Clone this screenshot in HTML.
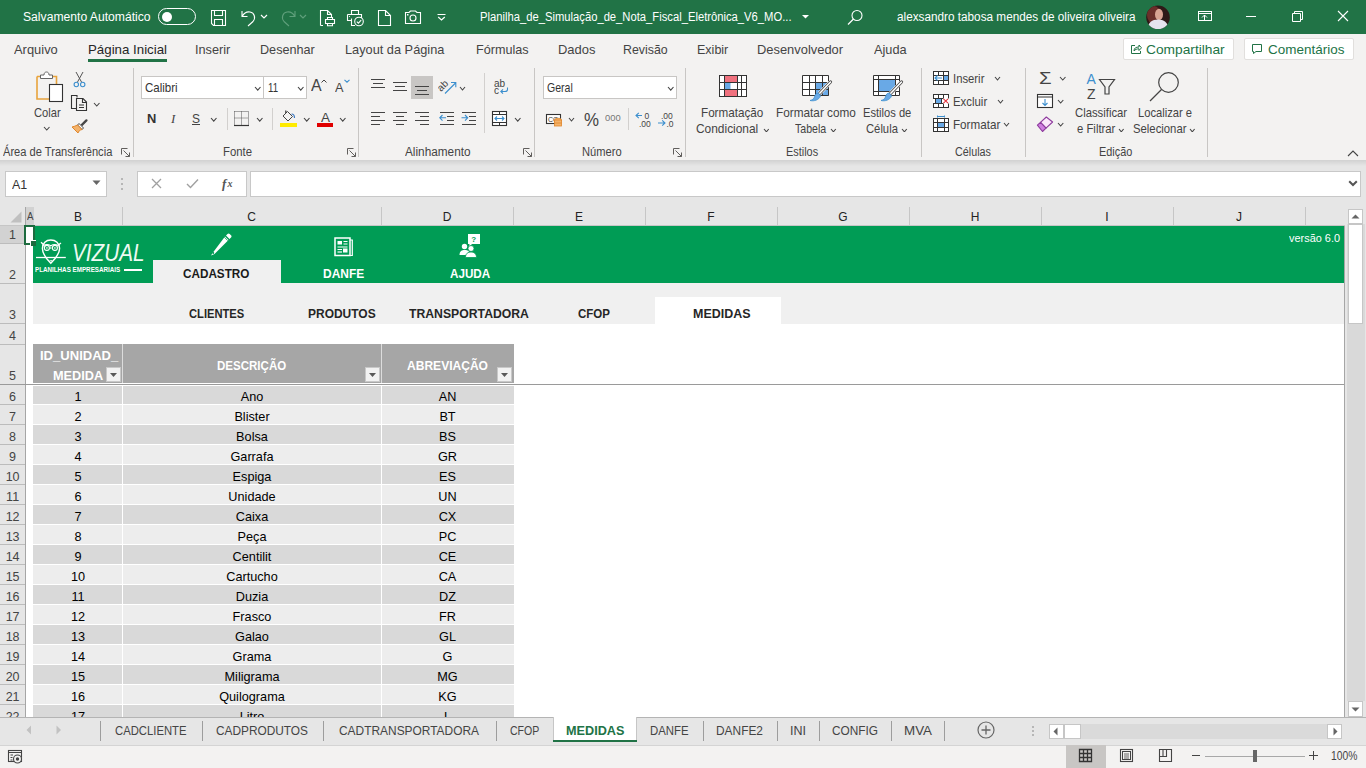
<!DOCTYPE html><html><head><meta charset="utf-8"><style>
html,body{margin:0;padding:0;width:1366px;height:768px;overflow:hidden;background:#fff;}
body{position:relative;font-family:"Liberation Sans",sans-serif;}
body>*{position:absolute;box-sizing:border-box;}
.t{white-space:nowrap;line-height:1;transform-origin:0 0;}
</style></head><body>
<div style="left:0px;top:0px;width:1366px;height:34px;background:#217346;"></div>
<div class="t" style="left:23.00px;top:10.84px;font-size:12px;color:#fff;transform:scaleX(1.0123);">Salvamento Automático</div>
<div style="left:158px;top:8px;width:38px;height:17px;background:transparent;border:1.2px solid #fff;border-radius:9px;"></div>
<div style="left:161.5px;top:11.5px;width:10px;height:10px;background:#fff;border-radius:50%;"></div>
<svg style="left:210px;top:9px;" width="18" height="18" viewBox="0 0 18 18"><path d="M1.5 1.5 H15.5 V16.5 H3.5 L1.5 14.5 Z M4.5 1.5 V6.5 H12.5 V1.5 M4.5 16.5 V10.5 H12.5 V16.5" fill="none" stroke="#fff" stroke-width="1.1"/></svg>
<svg style="left:240px;top:9px;" width="18" height="18" viewBox="0 0 18 18"><path d="M2 2 V7.5 H7.5 M2.3 7.2 C4 4.2 7 2.5 10 3 C14.5 3.8 16 9 13 12.5 L8 17" fill="none" stroke="#fff" stroke-width="1.1"/></svg>
<svg style="left:260px;top:14px;" width="8" height="5" viewBox="0 0 8 5"><path d="M1 1 L4.0 4 L7 1" fill="none" stroke="#fff" stroke-width="1.2"/></svg>
<svg style="left:279px;top:9px;" width="18" height="18" viewBox="0 0 18 18"><path d="M16 2 V7.5 H10.5 M15.7 7.2 C14 4.2 11 2.5 8 3 C3.5 3.8 2 9 5 12.5 L10 17" fill="none" stroke="#5f9f7b" stroke-width="1.1"/></svg>
<svg style="left:299px;top:14px;" width="8" height="5" viewBox="0 0 8 5"><path d="M1 1 L4.0 4 L7 1" fill="none" stroke="#5f9f7b" stroke-width="1.2"/></svg>
<svg style="left:319px;top:10px;" width="17" height="17" viewBox="0 0 17 17"><path d="M1.5 15.5 V0.5 H8.5 L12.5 4.5 V7 M8.5 0.5 V4.5 H12.5 M1.5 15.5 H4" fill="none" stroke="#fff" stroke-width="1.1"/><path d="M6.5 9.5 H15.5 V13.5 H6.5 Z M8.5 9.5 V7.5 H13.5 V9.5 M8.5 13.5 V15.8 H13.5 V13.5" fill="none" stroke="#fff" stroke-width="1.1"/></svg>
<svg style="left:346px;top:9px;" width="19" height="19" viewBox="0 0 19 19"><path d="M5.5 5.5 V1.5 H12.5 V5.5 M1.5 5.5 H15.5 V9 M1.5 5.5 V11.5 H5.5 M5.5 9.5 V16.5 H9" fill="none" stroke="#fff" stroke-width="1.1"/><circle cx="3.5" cy="7.5" r="0.6" fill="#fff"/><circle cx="13" cy="12.5" r="4.3" fill="#217346" stroke="#fff" stroke-width="1.1"/><path d="M10.8 12.6 L12.4 14.2 L15.2 11.2" fill="none" stroke="#fff" stroke-width="1.1"/></svg>
<svg style="left:377px;top:10px;" width="15" height="17" viewBox="0 0 15 17"><path d="M1.5 0.5 H8.5 L13.5 5.5 V15.5 H1.5 Z M8.5 0.5 V5.5 H13.5" fill="none" stroke="#fff" stroke-width="1.1"/></svg>
<svg style="left:404px;top:10px;" width="18" height="15" viewBox="0 0 18 15"><path d="M1.5 2.5 H5 L6.5 1 H11.5 L13 2.5 H16.5 V13.5 H1.5 Z" fill="none" stroke="#fff" stroke-width="1.1"/><circle cx="9" cy="8" r="3" fill="none" stroke="#fff" stroke-width="1.1"/><rect x="3" y="4" width="1.5" height="1.5" fill="#fff"/></svg>
<svg style="left:437px;top:12px;" width="9" height="9" viewBox="0 0 9 9"><path d="M0.5 2.5 H8.5" stroke="#fff" stroke-width="1"/><path d="M1.2 5 L4.5 8 L7.8 5" fill="none" stroke="#fff" stroke-width="1.2"/></svg>
<div class="t" style="left:480.40px;top:10.84px;font-size:12px;color:#fff;transform:scaleX(0.9359);">Planilha_de_Simulação_de_Nota_Fiscal_Eletrônica_V6_MO...</div>
<svg style="left:801px;top:14px;" width="9" height="6" viewBox="0 0 9 6"><path d="M1 1 L4.5 4.5 L8 1 Z" fill="#fff"/></svg>
<svg style="left:847px;top:9px;" width="17" height="17" viewBox="0 0 17 17"><circle cx="10" cy="6.5" r="5" fill="none" stroke="#fff" stroke-width="1.1"/><path d="M6.5 10 L1 15.5" stroke="#fff" stroke-width="1.2"/></svg>
<div class="t" style="left:897.00px;top:10.84px;font-size:12px;color:#fff;transform:scaleX(0.9797);">alexsandro tabosa mendes de oliveira oliveira</div>
<svg style="left:1146px;top:5px;" width="24" height="25" viewBox="0 0 24 25"><defs><clipPath id="av"><circle cx="12" cy="12.3" r="11.8"/></clipPath></defs><g clip-path="url(#av)"><rect width="24" height="25" fill="#2e1a18"/><ellipse cx="8" cy="10" rx="7" ry="9" fill="#6b2f2a"/><ellipse cx="13" cy="9.5" rx="4" ry="5.8" fill="#d9a493"/><path d="M1 25 C1.5 18 6 14.5 12 14.5 C18 14.5 22.5 18 23 25 Z" fill="#e6e4ee"/></g></svg>
<svg style="left:1197px;top:10px;" width="16" height="12" viewBox="0 0 16 12"><rect x="1.5" y="1.5" width="13" height="9" fill="none" stroke="#fff" stroke-width="1"/><path d="M1.5 3.5 H14.5" stroke="#fff" stroke-width="1"/><path d="M7.5 10.5 V5 M5 7.5 L7.5 5 L10 7.5" fill="none" stroke="#fff" stroke-width="1"/></svg>
<div style="left:1246px;top:16px;width:10px;height:1.2px;background:#fff;"></div>
<svg style="left:1290px;top:9px;" width="14" height="14" viewBox="0 0 14 14"><path d="M2.5 4.5 H10.5 V12.5 H2.5 Z M4.5 4.5 V2.5 H12.5 V10.5 H10.5" fill="none" stroke="#fff" stroke-width="1"/></svg>
<svg style="left:1336px;top:9px;" width="14" height="14" viewBox="0 0 14 14"><path d="M2 2 L12 12 M12 2 L2 12" stroke="#fff" stroke-width="1.1"/></svg>
<div style="left:0px;top:34px;width:1366px;height:126px;background:#f3f2f1;"></div>
<div class="t" style="left:14.10px;top:43.00px;font-size:13px;color:#444;transform:scaleX(0.9933);">Arquivo</div>
<div class="t" style="left:88.20px;top:43.00px;font-size:13px;color:#262626;transform:scaleX(1.0225);">Página Inicial</div>
<div class="t" style="left:195.30px;top:43.00px;font-size:13px;color:#444;transform:scaleX(0.9772);">Inserir</div>
<div class="t" style="left:260.00px;top:43.00px;font-size:13px;color:#444;transform:scaleX(0.9718);">Desenhar</div>
<div class="t" style="left:345.00px;top:43.00px;font-size:13px;color:#444;transform:scaleX(0.9819);">Layout da Página</div>
<div class="t" style="left:476.00px;top:43.00px;font-size:13px;color:#444;transform:scaleX(0.9707);">Fórmulas</div>
<div class="t" style="left:558.00px;top:43.00px;font-size:13px;color:#444;transform:scaleX(0.9975);">Dados</div>
<div class="t" style="left:623.00px;top:43.00px;font-size:13px;color:#444;transform:scaleX(0.9514);">Revisão</div>
<div class="t" style="left:696.70px;top:43.00px;font-size:13px;color:#444;transform:scaleX(0.9626);">Exibir</div>
<div class="t" style="left:757.40px;top:43.00px;font-size:13px;color:#444;transform:scaleX(0.9925);">Desenvolvedor</div>
<div class="t" style="left:874.20px;top:43.00px;font-size:13px;color:#444;transform:scaleX(0.9800);">Ajuda</div>
<div style="left:88px;top:59px;width:79px;height:3px;background:#217346;"></div>
<div style="left:1123px;top:38px;width:111px;height:22px;background:#fff;border:1px solid #e1dfdd;border-radius:2px;"></div>
<div style="left:1243.5px;top:38px;width:110px;height:22px;background:#fff;border:1px solid #e1dfdd;border-radius:2px;"></div>
<svg style="left:1130px;top:43px;" width="12" height="12" viewBox="0 0 12 12"><path d="M5 2.5 H1.5 V10.5 H10.5 V8" fill="none" stroke="#217346" stroke-width="1"/><path d="M4 8 C4 5 6 4 9 4 V2 L11.5 4.8 L9 7.5 V5.8 C7 5.8 5 6.5 4 8 Z" fill="none" stroke="#217346" stroke-width="1"/></svg>
<div class="t" style="left:1146.20px;top:43.00px;font-size:13px;color:#217346;transform:scaleX(1.0573);">Compartilhar</div>
<svg style="left:1251px;top:43px;" width="12" height="12" viewBox="0 0 12 12"><path d="M1.5 1.5 H10.5 V8.5 H5 L2.5 10.5 V8.5 H1.5 Z" fill="none" stroke="#217346" stroke-width="1"/></svg>
<div class="t" style="left:1267.50px;top:43.00px;font-size:13px;color:#217346;transform:scaleX(1.0364);">Comentários</div>
<div class="t" style="left:3.20px;top:145.84px;font-size:12px;color:#444;transform:scaleX(0.9259);">Área de Transferência</div>
<div class="t" style="left:222.70px;top:145.84px;font-size:12px;color:#444;transform:scaleX(0.9455);">Fonte</div>
<div class="t" style="left:405.00px;top:145.84px;font-size:12px;color:#444;transform:scaleX(0.9820);">Alinhamento</div>
<div class="t" style="left:581.60px;top:145.84px;font-size:12px;color:#444;transform:scaleX(0.9277);">Número</div>
<div class="t" style="left:786.30px;top:145.84px;font-size:12px;color:#444;transform:scaleX(0.9082);">Estilos</div>
<div class="t" style="left:955.40px;top:145.84px;font-size:12px;color:#444;transform:scaleX(0.8968);">Células</div>
<div class="t" style="left:1099.30px;top:145.84px;font-size:12px;color:#444;transform:scaleX(0.9077);">Edição</div>
<svg style="left:121px;top:148px;" width="10" height="10" viewBox="0 0 10 10"><path d="M0.5 6.5 V0.5 H6.5" fill="none" stroke="#605e5c" stroke-width="1"/><path d="M2.5 2.5 L8.5 8.5 M8.5 4.5 V8.5 H4.5" fill="none" stroke="#605e5c" stroke-width="1"/></svg>
<svg style="left:347px;top:148px;" width="10" height="10" viewBox="0 0 10 10"><path d="M0.5 6.5 V0.5 H6.5" fill="none" stroke="#605e5c" stroke-width="1"/><path d="M2.5 2.5 L8.5 8.5 M8.5 4.5 V8.5 H4.5" fill="none" stroke="#605e5c" stroke-width="1"/></svg>
<svg style="left:523px;top:148px;" width="10" height="10" viewBox="0 0 10 10"><path d="M0.5 6.5 V0.5 H6.5" fill="none" stroke="#605e5c" stroke-width="1"/><path d="M2.5 2.5 L8.5 8.5 M8.5 4.5 V8.5 H4.5" fill="none" stroke="#605e5c" stroke-width="1"/></svg>
<svg style="left:673px;top:148px;" width="10" height="10" viewBox="0 0 10 10"><path d="M0.5 6.5 V0.5 H6.5" fill="none" stroke="#605e5c" stroke-width="1"/><path d="M2.5 2.5 L8.5 8.5 M8.5 4.5 V8.5 H4.5" fill="none" stroke="#605e5c" stroke-width="1"/></svg>
<div style="left:133px;top:68px;width:1px;height:89px;background:#c8c6c4;"></div>
<div style="left:358px;top:68px;width:1px;height:89px;background:#c8c6c4;"></div>
<div style="left:534px;top:68px;width:1px;height:89px;background:#c8c6c4;"></div>
<div style="left:685px;top:68px;width:1px;height:89px;background:#c8c6c4;"></div>
<div style="left:921px;top:68px;width:1px;height:89px;background:#c8c6c4;"></div>
<div style="left:1025px;top:68px;width:1px;height:89px;background:#c8c6c4;"></div>
<div style="left:1207px;top:68px;width:1px;height:89px;background:#c8c6c4;"></div>
<div style="left:227px;top:108px;width:1px;height:22px;background:#d2d0ce;"></div>
<div style="left:272px;top:108px;width:1px;height:22px;background:#d2d0ce;"></div>
<div style="left:484px;top:73px;width:1px;height:60px;background:#d2d0ce;"></div>
<div style="left:628px;top:108px;width:1px;height:22px;background:#d2d0ce;"></div>
<svg style="left:1347px;top:150px;" width="12" height="7" viewBox="0 0 12 7"><path d="M1 6 L6 1 L11 6" fill="none" stroke="#444" stroke-width="1.1"/></svg>
<svg style="left:35px;top:71px;" width="29" height="32" viewBox="0 0 29 32"><path d="M2 5.5 H6 M14 5.5 H21.5 V13" fill="none" stroke="#e8a33c" stroke-width="1.6"/><path d="M2 5.5 V28 H14" fill="none" stroke="#e8a33c" stroke-width="1.6"/><path d="M5.5 7.5 V4 H9 C9 2 10 1 11.5 1 C13 1 14 2 14 4 H17.5 V7.5 Z" fill="#fff" stroke="#666" stroke-width="1"/><rect x="14.5" y="13.5" width="13" height="17" fill="#fff" stroke="#333" stroke-width="1.1"/></svg>
<div class="t" style="left:34.10px;top:105.70px;font-size:13px;color:#444;transform:scaleX(0.8591);">Colar</div>
<svg style="left:43px;top:126px;" width="7.5" height="5" viewBox="0 0 7.5 5"><path d="M1 1 L3.75 4 L6.5 1" fill="none" stroke="#444" stroke-width="1.1"/></svg>
<svg style="left:73px;top:71px;" width="13" height="17" viewBox="0 0 13 17"><path d="M3 1 L8.5 11 M10 1 L4.5 11" stroke="#555" stroke-width="1"/><circle cx="3.3" cy="13.5" r="2.2" fill="none" stroke="#3c8fce" stroke-width="1.1"/><circle cx="9.7" cy="13.5" r="2.2" fill="none" stroke="#3c8fce" stroke-width="1.1"/></svg>
<svg style="left:70px;top:94px;" width="19" height="18" viewBox="0 0 19 18"><path d="M7 3.5 V1.5 H1.5 V14.5 H6" fill="none" stroke="#333" stroke-width="1.1"/><path d="M6.5 4.5 H13 L16.5 8 V16.5 H6.5 Z M12.5 4.5 V8.5 H16.5 M9 11 H14 M9 13.5 H14" fill="none" stroke="#333" stroke-width="1.1"/></svg>
<svg style="left:93px;top:101.5px;" width="7.5" height="5" viewBox="0 0 7.5 5"><path d="M1 1 L3.75 4 L6.5 1" fill="none" stroke="#444" stroke-width="1.1"/></svg>
<svg style="left:71px;top:118px;" width="17" height="16" viewBox="0 0 17 16"><path d="M10 7 L15 2 C15.6 1.4 16.4 2.2 15.8 2.8 L10.8 7.8" fill="none" stroke="#444" stroke-width="1.1"/><path d="M8 5.5 L12.5 10 L11 11.5 L6.5 7 Z" fill="#fff" stroke="#444" stroke-width="1"/><path d="M6.5 7 C5 8 2.5 8.5 1 9 L7 15 C7.5 13.5 8.5 12 11 11.5 Z" fill="#f3b26a" stroke="#e0862a" stroke-width="1"/></svg>
<div style="left:141px;top:76px;width:123px;height:23px;background:#fff;border:1px solid #c8c6c4;"></div>
<div style="left:263px;top:76px;width:44px;height:23px;background:#fff;border:1px solid #c8c6c4;"></div>
<div class="t" style="left:144.80px;top:81.00px;font-size:13px;color:#333;transform:scaleX(0.8872);">Calibri</div>
<svg style="left:254px;top:85.5px;" width="7.5" height="5.2" viewBox="0 0 7.5 5.2"><path d="M1 1 L3.75 4.2 L6.5 1" fill="none" stroke="#444" stroke-width="1.1"/></svg>
<div class="t" style="left:268.00px;top:81.00px;font-size:13px;color:#333;transform:scaleX(0.7407);">11</div>
<svg style="left:297px;top:85.5px;" width="7.5" height="5.2" viewBox="0 0 7.5 5.2"><path d="M1 1 L3.75 4.2 L6.5 1" fill="none" stroke="#444" stroke-width="1.1"/></svg>
<div class="t" style="left:311.00px;top:78.46px;font-size:16px;color:#444;transform:scaleX(0.9933);">A</div>
<svg style="left:321px;top:79px;" width="6" height="4" viewBox="0 0 6 4"><path d="M0.5 3.5 L3 1 L5.5 3.5" fill="none" stroke="#444" stroke-width="1"/></svg>
<div class="t" style="left:334.80px;top:81.00px;font-size:13px;color:#444;transform:scaleX(0.9802);">A</div>
<svg style="left:344px;top:79px;" width="6" height="4" viewBox="0 0 6 4"><path d="M0.5 0.8 L3 3.2 L5.5 0.8" fill="none" stroke="#3c8fce" stroke-width="1.1"/></svg>
<div class="t" style="left:146.90px;top:111.77px;font-size:13.5px;color:#333;font-weight:bold;transform:scaleX(0.9538);">N</div>
<div class="t" style="left:171.00px;top:112.20px;font-size:13px;color:#444;font-family:'Liberation Serif';font-style:italic;">I</div>
<div class="t" style="left:192.00px;top:112.20px;font-size:13px;color:#444;transform:scaleX(0.9225);">S</div>
<div style="left:192px;top:124.2px;width:8px;height:1px;background:#444;"></div>
<svg style="left:209.5px;top:116.5px;" width="7.5" height="5.2" viewBox="0 0 7.5 5.2"><path d="M1 1 L3.75 4.2 L6.5 1" fill="none" stroke="#444" stroke-width="1.1"/></svg>
<svg style="left:233px;top:110px;" width="17" height="17" viewBox="0 0 17 17"><path d="M1.5 1.5 H15.5 V14.5 M1.5 1.5 V14.5 M8.5 1.5 V14.5 M1.5 8 H15.5" fill="none" stroke="#555" stroke-width="1" stroke-dasharray="1 1"/><path d="M1 15.5 H16" stroke="#333" stroke-width="1.2"/></svg>
<svg style="left:256px;top:116.5px;" width="7.5" height="5.2" viewBox="0 0 7.5 5.2"><path d="M1 1 L3.75 4.2 L6.5 1" fill="none" stroke="#444" stroke-width="1.1"/></svg>
<svg style="left:280px;top:110px;" width="17" height="18" viewBox="0 0 17 18"><path d="M3 6 L7.5 1.5 L12.5 6.5 L8 11 Z" fill="none" stroke="#444" stroke-width="1"/><path d="M5.5 3 V1 C5.5 0.5 6.2 0.5 6.2 1 V3" fill="none" stroke="#444" stroke-width="0.8"/><path d="M11.5 4 C13.5 4 14.5 5.5 14.5 8" fill="none" stroke="#3c79c4" stroke-width="1.2"/></svg>
<div style="left:280px;top:123px;width:16.5px;height:4px;background:#ffeb00;"></div>
<svg style="left:302.9px;top:116.5px;" width="7.5" height="5.2" viewBox="0 0 7.5 5.2"><path d="M1 1 L3.75 4.2 L6.5 1" fill="none" stroke="#444" stroke-width="1.1"/></svg>
<div class="t" style="left:320.50px;top:111.00px;font-size:13px;color:#444;transform:scaleX(1.0378);">A</div>
<div style="left:316.8px;top:123px;width:16.4px;height:4px;background:#e00000;"></div>
<svg style="left:339px;top:116.5px;" width="7.5" height="5.2" viewBox="0 0 7.5 5.2"><path d="M1 1 L3.75 4.2 L6.5 1" fill="none" stroke="#444" stroke-width="1.1"/></svg>
<div style="left:371px;top:79px;width:14px;height:1.2px;background:#444;"></div>
<div style="left:373px;top:83px;width:10px;height:1.2px;background:#444;"></div>
<div style="left:371px;top:87px;width:14px;height:1.2px;background:#444;"></div>
<div style="left:393px;top:82px;width:14px;height:1.2px;background:#444;"></div>
<div style="left:395px;top:86px;width:10px;height:1.2px;background:#444;"></div>
<div style="left:393px;top:90px;width:14px;height:1.2px;background:#444;"></div>
<div style="left:411px;top:76px;width:22px;height:23px;background:#c8c6c4;"></div>
<div style="left:415px;top:86px;width:14px;height:1.2px;background:#444;"></div>
<div style="left:417px;top:90px;width:10px;height:1.2px;background:#444;"></div>
<div style="left:415px;top:94px;width:14px;height:1.2px;background:#444;"></div>
<svg style="left:438px;top:78px;" width="20" height="17" viewBox="0 0 20 17"><text x="0" y="0" transform="translate(3,14) rotate(-45)" font-family="Liberation Sans" font-size="10" fill="#444">ab</text><path d="M7 15.5 L17.5 5 M13 4.5 H17.8 V9.3" fill="none" stroke="#3c8fce" stroke-width="1.1"/></svg>
<svg style="left:459px;top:85.5px;" width="7" height="5" viewBox="0 0 7 5"><path d="M1 1 L3.5 4 L6 1" fill="none" stroke="#444" stroke-width="1.1"/></svg>
<svg style="left:493px;top:78px;" width="17" height="18" viewBox="0 0 17 18"><text x="1" y="8.5" font-family="Liberation Sans" font-size="10" fill="#444">ab</text><text x="1" y="16" font-family="Liberation Sans" font-size="10" fill="#444">c</text><path d="M14.5 9.5 V11.5 C14.5 13 13.5 13.5 12 13.5 H8 M10 11.3 L7.8 13.5 L10 15.7" fill="none" stroke="#3c8fce" stroke-width="1.1"/></svg>
<div style="left:371px;top:112px;width:14px;height:1.2px;background:#444;"></div>
<div style="left:371px;top:116px;width:9px;height:1.2px;background:#444;"></div>
<div style="left:371px;top:120px;width:14px;height:1.2px;background:#444;"></div>
<div style="left:371px;top:124px;width:9px;height:1.2px;background:#444;"></div>
<div style="left:393px;top:112px;width:14px;height:1.2px;background:#444;"></div>
<div style="left:396px;top:116px;width:8px;height:1.2px;background:#444;"></div>
<div style="left:393px;top:120px;width:14px;height:1.2px;background:#444;"></div>
<div style="left:396px;top:124px;width:8px;height:1.2px;background:#444;"></div>
<div style="left:415px;top:112px;width:14px;height:1.2px;background:#444;"></div>
<div style="left:420px;top:116px;width:9px;height:1.2px;background:#444;"></div>
<div style="left:415px;top:120px;width:14px;height:1.2px;background:#444;"></div>
<div style="left:420px;top:124px;width:9px;height:1.2px;background:#444;"></div>
<div style="left:440px;top:112px;width:14px;height:1.2px;background:#444;"></div>
<div style="left:440px;top:124px;width:14px;height:1.2px;background:#444;"></div>
<div style="left:447px;top:116px;width:7px;height:1.2px;background:#444;"></div>
<div style="left:447px;top:120px;width:7px;height:1.2px;background:#444;"></div>
<svg style="left:439px;top:114px;" width="8" height="8" viewBox="0 0 8 8"><path d="M7 3.8 H1 M3.5 1 L0.8 3.8 L3.5 6.6" fill="none" stroke="#3c8fce" stroke-width="1.1"/></svg>
<div style="left:462px;top:112px;width:14px;height:1.2px;background:#444;"></div>
<div style="left:462px;top:124px;width:14px;height:1.2px;background:#444;"></div>
<div style="left:469px;top:116px;width:7px;height:1.2px;background:#444;"></div>
<div style="left:469px;top:120px;width:7px;height:1.2px;background:#444;"></div>
<svg style="left:461px;top:114px;" width="8" height="8" viewBox="0 0 8 8"><path d="M0.5 3.8 H6.5 M4 1 L6.7 3.8 L4 6.6" fill="none" stroke="#3c8fce" stroke-width="1.1"/></svg>
<svg style="left:491px;top:110px;" width="17" height="17" viewBox="0 0 17 17"><rect x="1.5" y="1.5" width="14" height="14" fill="#fff" stroke="#333" stroke-width="1.1"/><path d="M1.5 4.5 H15.5 M1.5 12.5 H15.5 M8.5 1.5 V4.5 M8.5 12.5 V15.5" stroke="#333" stroke-width="1"/><path d="M4 8.5 H13 M6 6.5 L4 8.5 L6 10.5 M11 6.5 L13 8.5 L11 10.5" fill="none" stroke="#3c8fce" stroke-width="1.1"/></svg>
<svg style="left:513.5px;top:116.5px;" width="7.5" height="5.2" viewBox="0 0 7.5 5.2"><path d="M1 1 L3.75 4.2 L6.5 1" fill="none" stroke="#444" stroke-width="1.1"/></svg>
<div style="left:543px;top:76px;width:134px;height:23px;background:#fff;border:1px solid #c8c6c4;"></div>
<div class="t" style="left:546.80px;top:81.00px;font-size:13px;color:#333;transform:scaleX(0.8114);">Geral</div>
<svg style="left:666.5px;top:85.5px;" width="7.5" height="5.2" viewBox="0 0 7.5 5.2"><path d="M1 1 L3.75 4.2 L6.5 1" fill="none" stroke="#444" stroke-width="1.1"/></svg>
<svg style="left:545px;top:113px;" width="19" height="15" viewBox="0 0 19 15"><rect x="1.5" y="1.5" width="14" height="9" fill="#fff" stroke="#333" stroke-width="1.1"/><text x="3" y="9" font-family="Liberation Sans" font-size="7" fill="#333">CC</text><ellipse cx="13" cy="7" rx="3.5" ry="1.8" fill="#f3b26a" stroke="#e0862a" stroke-width="0.8"/><rect x="9.5" y="7" width="7" height="6" fill="#f3b26a" stroke="#e0862a" stroke-width="0.8"/><path d="M9.5 10 H16.5" stroke="#e0862a" stroke-width="0.8"/></svg>
<svg style="left:568px;top:116.5px;" width="7" height="5" viewBox="0 0 7 5"><path d="M1 1 L3.5 4 L6 1" fill="none" stroke="#444" stroke-width="1.1"/></svg>
<div class="t" style="left:583.50px;top:109.62px;font-size:19px;color:#444;transform:scaleX(0.8881);">%</div>
<div class="t" style="left:605.00px;top:114.38px;font-size:9px;color:#777;transform:scaleX(1.0400);">000</div>
<svg style="left:635px;top:111px;" width="18" height="16" viewBox="0 0 18 16"><path d="M7 4.5 H1 M3.8 1.8 L1 4.5 L3.8 7.2" fill="none" stroke="#3c8fce" stroke-width="1.1"/><text x="9.5" y="8" font-family="Liberation Sans" font-size="8.5" fill="#444">0</text><text x="4" y="15.5" font-family="Liberation Sans" font-size="8.5" fill="#444">.00</text></svg>
<svg style="left:657px;top:111px;" width="18" height="16" viewBox="0 0 18 16"><text x="4" y="8" font-family="Liberation Sans" font-size="8.5" fill="#444">.00</text><path d="M1 12 H8 M5.2 9.3 L8 12 L5.2 14.7" fill="none" stroke="#3c8fce" stroke-width="1.1"/><text x="9.5" y="15.5" font-family="Liberation Sans" font-size="8.5" fill="#444">.0</text></svg>
<svg style="left:719px;top:75px;" width="28" height="22" viewBox="0 0 28 22"><rect width="28" height="22" fill="#fff"/><rect x="5.5" y="0.5" width="13" height="7" fill="#f0727f"/><rect x="5.5" y="14.5" width="13" height="7" fill="#f0727f"/><rect x="5.5" y="7.5" width="6" height="7" fill="#69a9e6"/><path d="M5.5 0.5 V21.5" stroke="#333" stroke-width="1"/><path d="M18.5 0.5 V21.5" stroke="#333" stroke-width="1"/><path d="M22.5 0.5 V21.5" stroke="#333" stroke-width="1"/><path d="M0.5 7.5 H27.5" stroke="#333" stroke-width="1"/><path d="M0.5 14.5 H27.5" stroke="#333" stroke-width="1"/><rect x="0.5" y="0.5" width="27" height="21" fill="none" stroke="#333" stroke-width="1"/></svg>
<svg style="left:701.4px;top:100px;" width="0" height="0" viewBox="0 0 0 0"></svg>
<div class="t" style="left:701.40px;top:105.80px;font-size:13px;color:#444;transform:scaleX(0.8980);">Formatação</div>
<div class="t" style="left:695.90px;top:121.80px;font-size:13px;color:#444;transform:scaleX(0.9166);">Condicional</div>
<svg style="left:762.5px;top:127.5px;" width="6.8" height="4.8" viewBox="0 0 6.8 4.8"><path d="M1 1 L3.4 3.8 L5.8 1" fill="none" stroke="#444" stroke-width="1.1"/></svg>
<svg style="left:802px;top:74px;" width="31" height="28" viewBox="0 0 31 28"><rect x="0.5" y="1" width="26" height="21" fill="#fff"/><rect x="13" y="8" width="14" height="14" fill="#69a9e6"/><path d="M0.5 1.5 H26.5 V21.5 H0.5 Z M7.5 1 V22 M13.5 1 V22 M20.5 1 V22 M0.5 8.5 H26.5 M0.5 15.5 H26.5" fill="none" stroke="#333" stroke-width="1"/><path d="M28 8.5 L17 20" stroke="#fff" stroke-width="4"/><path d="M28.5 8 L17.5 19.5" stroke="#444" stroke-width="3.2" stroke-linecap="round"/><path d="M28.5 8 L17.5 19.5" stroke="#fff" stroke-width="1.6" stroke-linecap="round"/><path d="M16.5 19 C14 19 13 20.5 12.5 23 C12 25 10 26 8 26.5 C12 27.5 17 26 18.5 22 Z" fill="#69a9e6" stroke="#3c8fce" stroke-width="0.8"/></svg>
<div class="t" style="left:775.90px;top:105.80px;font-size:13px;color:#444;transform:scaleX(0.9065);">Formatar como</div>
<div class="t" style="left:795.20px;top:121.80px;font-size:13px;color:#444;transform:scaleX(0.8140);">Tabela</div>
<svg style="left:830.4px;top:127.5px;" width="6.8" height="4.8" viewBox="0 0 6.8 4.8"><path d="M1 1 L3.4 3.8 L5.8 1" fill="none" stroke="#444" stroke-width="1.1"/></svg>
<svg style="left:873px;top:74px;" width="31" height="28" viewBox="0 0 31 28"><rect x="0.5" y="1" width="26" height="21" fill="#fff"/><rect x="5" y="5" width="17" height="12" fill="#69a9e6"/><path d="M0.5 1.5 H26.5 V21.5 H0.5 Z M5.5 1 V22 M22.5 1 V22 M0.5 5.5 H26.5 M0.5 17.5 H26.5" fill="none" stroke="#333" stroke-width="1"/><path d="M28 8.5 L17 20" stroke="#f3f2f1" stroke-width="4"/><path d="M28.5 8 L17.5 19.5" stroke="#444" stroke-width="3.2" stroke-linecap="round"/><path d="M28.5 8 L17.5 19.5" stroke="#fff" stroke-width="1.6" stroke-linecap="round"/><path d="M16.5 19 C14 19 13 20.5 12.5 23 C12 25 10 26 8 26.5 C12 27.5 17 26 18.5 22 Z" fill="#69a9e6" stroke="#3c8fce" stroke-width="0.8"/></svg>
<div class="t" style="left:862.60px;top:105.80px;font-size:13px;color:#444;transform:scaleX(0.8568);">Estilos de</div>
<div class="t" style="left:866.00px;top:121.80px;font-size:13px;color:#444;transform:scaleX(0.8651);">Célula</div>
<svg style="left:901.1px;top:127.5px;" width="6.8" height="4.8" viewBox="0 0 6.8 4.8"><path d="M1 1 L3.4 3.8 L5.8 1" fill="none" stroke="#444" stroke-width="1.1"/></svg>
<svg style="left:932px;top:70px;" width="18" height="16" viewBox="0 0 18 16"><rect x="1.5" y="1.5" width="15" height="13" fill="#fff" stroke="#333" stroke-width="1"/><rect x="12" y="6" width="4" height="4" fill="#69a9e6"/><path d="M1.5 5.5 H16.5 M1.5 10.5 H16.5 M6.5 1.5 V5.5 M6.5 10.5 V14.5 M11.5 1.5 V14.5" fill="none" stroke="#333" stroke-width="1"/><path d="M10 8 H3 M5.5 5.5 L3 8 L5.5 10.5" fill="none" stroke="#3c8fce" stroke-width="1.1"/></svg>
<div class="t" style="left:952.70px;top:72.00px;font-size:13px;color:#444;transform:scaleX(0.8692);">Inserir</div>
<svg style="left:994px;top:76px;" width="7" height="5" viewBox="0 0 7 5"><path d="M1 1 L3.5 4 L6 1" fill="none" stroke="#444" stroke-width="1.1"/></svg>
<svg style="left:932px;top:93px;" width="18" height="16" viewBox="0 0 18 16"><rect x="1" y="1" width="16" height="14" fill="#fff"/><rect x="4" y="6" width="5" height="4" fill="#69a9e6"/><path d="M1 1.5 H17 M1 14.5 H17 M1.5 1.5 V5.5 M1.5 10.5 V14.5 M16.5 1.5 V5.5 M16.5 10.5 V14.5 M1 5.5 H11 M1 10.5 H11 M6.5 1.5 V5.5 M6.5 10.5 V14.5 M11.5 1.5 V5.5 M11.5 10.5 V14.5 M3.5 5.5 V10.5 M9.5 5.5 V10.5" fill="none" stroke="#333" stroke-width="1"/><path d="M11.5 5.8 L16 10.2 M16 5.8 L11.5 10.2" stroke="#e3323c" stroke-width="1.1"/></svg>
<div class="t" style="left:952.70px;top:95.00px;font-size:13px;color:#444;transform:scaleX(0.8766);">Excluir</div>
<svg style="left:996.7px;top:99px;" width="7" height="5" viewBox="0 0 7 5"><path d="M1 1 L3.5 4 L6 1" fill="none" stroke="#444" stroke-width="1.1"/></svg>
<svg style="left:932px;top:115px;" width="18" height="18" viewBox="0 0 18 18"><rect x="1.5" y="3.5" width="15" height="13" fill="#fff" stroke="#333" stroke-width="1"/><rect x="6" y="8" width="6" height="4" fill="#69a9e6"/><path d="M1.5 7.5 H16.5 M1.5 12.5 H16.5 M5.5 3.5 V16.5 M12.5 3.5 V16.5" fill="none" stroke="#333" stroke-width="1"/><path d="M5.5 1.5 H12.5 M5.5 0.5 V2.5 M12.5 0.5 V2.5" fill="none" stroke="#3c8fce" stroke-width="1"/></svg>
<div class="t" style="left:952.70px;top:117.50px;font-size:13px;color:#444;transform:scaleX(0.8969);">Formatar</div>
<svg style="left:1002.8px;top:121.5px;" width="7" height="5" viewBox="0 0 7 5"><path d="M1 1 L3.5 4 L6 1" fill="none" stroke="#444" stroke-width="1.1"/></svg>
<div class="t" style="left:1038.50px;top:71.46px;font-size:16px;color:#444;transform:scaleX(1.2739);">Σ</div>
<svg style="left:1058.5px;top:75.7px;" width="7.5" height="5" viewBox="0 0 7.5 5"><path d="M1 1 L3.75 4 L6.5 1" fill="none" stroke="#444" stroke-width="1.1"/></svg>
<svg style="left:1036px;top:93px;" width="18" height="16" viewBox="0 0 18 16"><rect x="1.5" y="1.5" width="15" height="13" fill="#fff" stroke="#333" stroke-width="1.1"/><path d="M1.5 4 H16.5" stroke="#333" stroke-width="1"/><path d="M9 6 V12.5 M6.5 10 L9 12.5 L11.5 10" fill="none" stroke="#3c8fce" stroke-width="1.1"/></svg>
<svg style="left:1057px;top:99px;" width="7.3" height="5" viewBox="0 0 7.3 5"><path d="M1 1 L3.65 4 L6.3 1" fill="none" stroke="#444" stroke-width="1.1"/></svg>
<svg style="left:1036px;top:116px;" width="18" height="17" viewBox="0 0 18 17"><path d="M4.5 6.3 L10.3 1 L16.6 6 L10 12.2 Z" fill="#fbe8fb" stroke="#8e3c9e" stroke-width="1.1" stroke-linejoin="round"/><path d="M1.4 9.2 L4.5 6.3 L10 12.2 L6.5 15.5 Z" fill="#cf7fe0" stroke="#8e3c9e" stroke-width="1.1" stroke-linejoin="round"/></svg>
<svg style="left:1057px;top:122.3px;" width="7.3" height="5" viewBox="0 0 7.3 5"><path d="M1 1 L3.65 4 L6.3 1" fill="none" stroke="#444" stroke-width="1.1"/></svg>
<svg style="left:1086px;top:72px;" width="30" height="28" viewBox="0 0 30 28"><text x="0.5" y="12.3" font-family="Liberation Sans" font-size="14" fill="#3c8fce">A</text><text x="1" y="26.5" font-family="Liberation Sans" font-size="14" fill="#444">Z</text><path d="M13.5 7.5 H28.5 L23 15 V22 H19 V15 Z" fill="none" stroke="#444" stroke-width="1.2"/></svg>
<div class="t" style="left:1074.80px;top:106.00px;font-size:13px;color:#444;transform:scaleX(0.8688);">Classificar</div>
<div class="t" style="left:1076.50px;top:122.00px;font-size:13px;color:#444;transform:scaleX(0.8715);">e Filtrar</div>
<svg style="left:1118.3px;top:127.5px;" width="6.6" height="4.8" viewBox="0 0 6.6 4.8"><path d="M1 1 L3.3 3.8 L5.6 1" fill="none" stroke="#444" stroke-width="1.1"/></svg>
<svg style="left:1148px;top:70px;" width="33" height="33" viewBox="0 0 33 33"><circle cx="20.5" cy="12.5" r="9.8" fill="none" stroke="#444" stroke-width="1.2"/><path d="M13.5 19.5 L2 31" stroke="#444" stroke-width="1.2"/></svg>
<div class="t" style="left:1137.60px;top:106.00px;font-size:13px;color:#444;transform:scaleX(0.8602);">Localizar e</div>
<div class="t" style="left:1132.50px;top:122.00px;font-size:13px;color:#444;transform:scaleX(0.8706);">Selecionar</div>
<svg style="left:1189.4px;top:127.5px;" width="6.6" height="4.8" viewBox="0 0 6.6 4.8"><path d="M1 1 L3.3 3.8 L5.6 1" fill="none" stroke="#444" stroke-width="1.1"/></svg>
<div style="left:0px;top:160px;width:1366px;height:47px;background:#e6e6e6;"></div>
<div style="left:0px;top:160px;width:1366px;height:6px;background:linear-gradient(rgba(0,0,0,0.09),rgba(0,0,0,0));"></div>
<div style="left:5px;top:171px;width:102px;height:26px;background:#fff;border:1px solid #c8c8c8;"></div>
<div class="t" style="left:12.30px;top:178.00px;font-size:13px;color:#333;transform:scaleX(0.9556);">A1</div>
<svg style="left:92px;top:180px;" width="9" height="6" viewBox="0 0 9 6"><path d="M0.5 0.5 H8.5 L4.5 5 Z" fill="#666"/></svg>
<div style="left:121px;top:178px;width:2px;height:2px;background:#a6a6a6;border-radius:1px;"></div>
<div style="left:121px;top:183px;width:2px;height:2px;background:#a6a6a6;border-radius:1px;"></div>
<div style="left:121px;top:188px;width:2px;height:2px;background:#a6a6a6;border-radius:1px;"></div>
<div style="left:137px;top:171px;width:110px;height:26px;background:#fff;border:1px solid #c8c8c8;"></div>
<svg style="left:151px;top:178px;" width="11" height="11" viewBox="0 0 11 11"><path d="M1 1 L10 10 M10 1 L1 10" stroke="#a0a0a0" stroke-width="1.3"/></svg>
<svg style="left:186px;top:178px;" width="13" height="11" viewBox="0 0 13 11"><path d="M1 6 L4.5 9.5 L12 1.5" fill="none" stroke="#a0a0a0" stroke-width="1.4"/></svg>
<div class="t" style="left:222.00px;top:176.50px;font-size:13px;color:#555;font-weight:bold;font-family:'Liberation Serif';font-style:italic;">f</div>
<div class="t" style="left:227.50px;top:179.03px;font-size:10px;color:#555;font-weight:bold;font-family:'Liberation Serif';font-style:italic;">x</div>
<div style="left:250px;top:171px;width:1111px;height:26px;background:#fff;border:1px solid #c8c8c8;"></div>
<svg style="left:1348px;top:180px;" width="10" height="7" viewBox="0 0 10 7"><path d="M1.2 1.2 L5 5 L8.8 1.2" fill="none" stroke="#555" stroke-width="2"/></svg>
<div style="left:0px;top:207px;width:1366px;height:19px;background:#e6e6e6;"></div>
<svg style="left:10px;top:211px;" width="12" height="12" viewBox="0 0 12 12"><path d="M11.5 0.5 V11.5 H0.5 Z" fill="#c0c0c0"/></svg>
<div style="left:25px;top:207px;width:9px;height:19px;background:#d2d2d2;"></div>
<div class="t" style="left:26.50px;top:211.27px;font-size:11.5px;color:#444;transform:scaleX(0.8473);">A</div>
<div style="left:122px;top:207px;width:1px;height:19px;background:#c6c6c6;"></div>
<div style="left:381px;top:207px;width:1px;height:19px;background:#c6c6c6;"></div>
<div style="left:513px;top:207px;width:1px;height:19px;background:#c6c6c6;"></div>
<div style="left:645px;top:207px;width:1px;height:19px;background:#c6c6c6;"></div>
<div style="left:777px;top:207px;width:1px;height:19px;background:#c6c6c6;"></div>
<div style="left:909px;top:207px;width:1px;height:19px;background:#c6c6c6;"></div>
<div style="left:1041px;top:207px;width:1px;height:19px;background:#c6c6c6;"></div>
<div style="left:1173px;top:207px;width:1px;height:19px;background:#c6c6c6;"></div>
<div style="left:1305px;top:207px;width:1px;height:19px;background:#c6c6c6;"></div>
<div style="left:0px;top:225px;width:1345px;height:1px;background:#c6c6c6;"></div>
<div class="t" style="left:74.00px;top:210.84px;font-size:12px;color:#222;">B</div>
<div class="t" style="left:247.16px;top:210.84px;font-size:12px;color:#222;">C</div>
<div class="t" style="left:442.66px;top:210.84px;font-size:12px;color:#222;">D</div>
<div class="t" style="left:575.00px;top:210.84px;font-size:12px;color:#222;">E</div>
<div class="t" style="left:707.34px;top:210.84px;font-size:12px;color:#222;">F</div>
<div class="t" style="left:838.34px;top:210.84px;font-size:12px;color:#222;">G</div>
<div class="t" style="left:970.66px;top:210.84px;font-size:12px;color:#222;">H</div>
<div class="t" style="left:1105.34px;top:210.84px;font-size:12px;color:#222;">I</div>
<div class="t" style="left:1236.00px;top:210.84px;font-size:12px;color:#222;">J</div>
<div style="left:0px;top:226px;width:25px;height:491px;background:#e6e6e6;"></div>
<div style="left:0px;top:226px;width:25px;height:17px;background:#d2d2d2;"></div>
<div style="left:25px;top:207px;width:1px;height:510px;background:#a6a6a6;"></div>
<div style="left:0px;top:243px;width:25px;height:1px;background:#bcbcbc;"></div>
<div style="left:0px;top:283px;width:25px;height:1px;background:#bcbcbc;"></div>
<div style="left:0px;top:323px;width:25px;height:1px;background:#bcbcbc;"></div>
<div style="left:0px;top:344px;width:25px;height:1px;background:#bcbcbc;"></div>
<div style="left:0px;top:404px;width:25px;height:1px;background:#bcbcbc;"></div>
<div style="left:0px;top:424px;width:25px;height:1px;background:#bcbcbc;"></div>
<div style="left:0px;top:444px;width:25px;height:1px;background:#bcbcbc;"></div>
<div style="left:0px;top:464px;width:25px;height:1px;background:#bcbcbc;"></div>
<div style="left:0px;top:484px;width:25px;height:1px;background:#bcbcbc;"></div>
<div style="left:0px;top:504px;width:25px;height:1px;background:#bcbcbc;"></div>
<div style="left:0px;top:524px;width:25px;height:1px;background:#bcbcbc;"></div>
<div style="left:0px;top:544px;width:25px;height:1px;background:#bcbcbc;"></div>
<div style="left:0px;top:564px;width:25px;height:1px;background:#bcbcbc;"></div>
<div style="left:0px;top:584px;width:25px;height:1px;background:#bcbcbc;"></div>
<div style="left:0px;top:604px;width:25px;height:1px;background:#bcbcbc;"></div>
<div style="left:0px;top:624px;width:25px;height:1px;background:#bcbcbc;"></div>
<div style="left:0px;top:644px;width:25px;height:1px;background:#bcbcbc;"></div>
<div style="left:0px;top:664px;width:25px;height:1px;background:#bcbcbc;"></div>
<div style="left:0px;top:684px;width:25px;height:1px;background:#bcbcbc;"></div>
<div style="left:0px;top:704px;width:25px;height:1px;background:#bcbcbc;"></div>
<div class="t" style="left:9.12px;top:229.22px;font-size:12.5px;color:#444;">1</div>
<div class="t" style="left:9.12px;top:269.22px;font-size:12.5px;color:#444;">2</div>
<div class="t" style="left:9.12px;top:309.22px;font-size:12.5px;color:#444;">3</div>
<div class="t" style="left:9.12px;top:330.22px;font-size:12.5px;color:#444;">4</div>
<div class="t" style="left:9.12px;top:370.22px;font-size:12.5px;color:#444;">5</div>
<div class="t" style="left:9.12px;top:391.22px;font-size:12.5px;color:#444;">6</div>
<div class="t" style="left:9.12px;top:411.22px;font-size:12.5px;color:#444;">7</div>
<div class="t" style="left:9.12px;top:431.22px;font-size:12.5px;color:#444;">8</div>
<div class="t" style="left:9.12px;top:451.22px;font-size:12.5px;color:#444;">9</div>
<div class="t" style="left:5.65px;top:471.22px;font-size:12.5px;color:#444;">10</div>
<div class="t" style="left:6.11px;top:491.22px;font-size:12.5px;color:#444;">11</div>
<div class="t" style="left:5.65px;top:511.22px;font-size:12.5px;color:#444;">12</div>
<div class="t" style="left:5.65px;top:531.22px;font-size:12.5px;color:#444;">13</div>
<div class="t" style="left:5.65px;top:551.22px;font-size:12.5px;color:#444;">14</div>
<div class="t" style="left:5.65px;top:571.22px;font-size:12.5px;color:#444;">15</div>
<div class="t" style="left:5.65px;top:591.22px;font-size:12.5px;color:#444;">16</div>
<div class="t" style="left:5.65px;top:611.22px;font-size:12.5px;color:#444;">17</div>
<div class="t" style="left:5.65px;top:631.22px;font-size:12.5px;color:#444;">18</div>
<div class="t" style="left:5.65px;top:651.22px;font-size:12.5px;color:#444;">19</div>
<div class="t" style="left:5.65px;top:671.22px;font-size:12.5px;color:#444;">20</div>
<div class="t" style="left:5.65px;top:691.22px;font-size:12.5px;color:#444;">21</div>
<div class="t" style="left:5.65px;top:711.22px;font-size:12.5px;color:#444;">22</div>
<div style="left:26px;top:226px;width:1318px;height:491px;background:#fff;"></div>
<div style="left:33px;top:226px;width:1311px;height:57px;background:#009c55;"></div>
<div style="left:153px;top:260px;width:128px;height:23px;background:#f0f0f0;"></div>
<div style="left:33px;top:283px;width:1311px;height:41px;background:#f0f0f0;"></div>
<div style="left:655px;top:297px;width:126px;height:27px;background:#fff;"></div>
<div style="left:24px;top:225px;width:11px;height:20px;background:transparent;border:2px solid #1d6b3f;"></div>
<div style="left:30px;top:240px;width:6px;height:6px;background:#1d6b3f;border-top:1px solid #fff;border-left:1px solid #fff;"></div>
<div style="left:0px;top:384px;width:1344px;height:1px;background:#9a9a9a;"></div>
<svg style="left:35px;top:238px;" width="34" height="28" viewBox="0 0 34 28"><path d="M1 19.5 H30.8" stroke="#fff" stroke-width="1.3"/><path d="M15.8 25.3 C11 20.5 7.4 15.5 7.4 10.5 C7.4 5 11 2 15.8 2 C20.6 2 24.6 5 24.6 10.5 C24.6 15.5 20.6 20.5 15.8 25.3 Z" fill="none" stroke="#fff" stroke-width="1.4"/><path d="M6 4.3 L9.2 7.3 M26 5 L22.6 7.5" stroke="#fff" stroke-width="1.3"/><path d="M8.5 7.6 Q12 5.2 15.8 7.8 Q19.6 5.2 23.2 7.6" fill="none" stroke="#fff" stroke-width="1.1"/><circle cx="11.9" cy="9.9" r="2.5" fill="none" stroke="#fff" stroke-width="1.1"/><circle cx="19.9" cy="9.9" r="2.5" fill="none" stroke="#fff" stroke-width="1.1"/><circle cx="11.9" cy="9.9" r="0.9" fill="#bfe6cf"/><circle cx="19.9" cy="9.9" r="0.9" fill="#bfe6cf"/><path d="M15.8 8.5 V11" stroke="#fff" stroke-width="0.9"/><path d="M14.8 22 L15.8 23.2 L16.8 22" fill="none" stroke="#fff" stroke-width="0.9"/></svg>
<div class="t" style="left:71.50px;top:240.88px;font-size:24px;color:#eefaf3;transform:scaleX(0.8628);font-style:italic;font-weight:300;-webkit-text-stroke:0;">VIZUAL</div>
<div class="t" style="left:34.80px;top:265.91px;font-size:7.2px;color:#fff;font-weight:bold;transform:scaleX(0.8708);">PLANILHAS EMPRESARIAIS</div>
<div style="left:124.3px;top:269px;width:17.7px;height:2px;background:#fff;"></div>
<svg style="left:208px;top:233px;" width="24" height="24" viewBox="0 0 24 24"><path d="M5 19.5 L3 22.5 L6.5 21 L20.5 7 L17 3.5 Z" fill="#fff"/><path d="M18 2.5 L19.5 1 C20.2 0.3 21 0.3 21.7 1 L23 2.3 C23.7 3 23.7 3.8 23 4.5 L21.5 6 Z" fill="#fff"/><path d="M16.3 4.2 L19.8 7.7" stroke="#009c55" stroke-width="0.8"/><circle cx="5.3" cy="20" r="0.9" fill="#009c55"/></svg>
<div class="t" style="left:183.30px;top:268.02px;font-size:12.5px;color:#1a1a1a;font-weight:bold;transform:scaleX(0.9371);">CADASTRO</div>
<svg style="left:334px;top:237px;" width="20" height="20" viewBox="0 0 20 20"><rect x="1" y="1" width="15" height="17.5" fill="none" stroke="#fff" stroke-width="1.5"/><path d="M16 3 H18.3 V18.5 H16" fill="none" stroke="#fff" stroke-width="1.2"/><rect x="3.5" y="4" width="4.5" height="3.5" fill="#fff"/><path d="M9.5 4.5 H13.5 M9.5 7 H13.5 M3.5 10 H13.5 M3.5 12.5 H8" stroke="#fff" stroke-width="1.2"/><rect x="9" y="11.5" width="4.5" height="4" fill="#fff"/><path d="M3.5 15 H8" stroke="#fff" stroke-width="1.2"/></svg>
<div class="t" style="left:322.90px;top:268.02px;font-size:12.5px;color:#fff;font-weight:bold;transform:scaleX(0.9564);">DANFE</div>
<svg style="left:459px;top:233px;" width="22" height="25" viewBox="0 0 22 25"><rect x="9" y="1" width="12" height="10" fill="#fff"/><path d="M10.5 11 L10 14 L13 11 Z" fill="#fff"/><text x="12.3" y="9" font-family="Liberation Sans" font-weight="bold" font-size="8" fill="#009c55">?</text><circle cx="5.5" cy="13.5" r="2.7" fill="#fff"/><path d="M0.5 22 C0.5 18 3 17 5.5 17 C8 17 9 17.5 10 18.5 L8 22 Z" fill="#fff"/><circle cx="12" cy="15.5" r="3" fill="#fff" stroke="#009c55" stroke-width="0.8"/><path d="M6.5 24.5 C6.5 20.5 9 19 12 19 C15 19 17.5 20.5 17.5 24.5 Z" fill="#fff" stroke="#009c55" stroke-width="0.8"/></svg>
<div class="t" style="left:450.40px;top:268.02px;font-size:12.5px;color:#fff;font-weight:bold;transform:scaleX(0.9332);">AJUDA</div>
<div class="t" style="left:1289.00px;top:233.27px;font-size:11.5px;color:#fff;transform:scaleX(0.9505);">versão 6.0</div>
<div class="t" style="left:188.85px;top:308.42px;font-size:12.5px;color:#262626;font-weight:bold;transform:scaleX(0.8942);">CLIENTES</div>
<div class="t" style="left:308.35px;top:308.42px;font-size:12.5px;color:#262626;font-weight:bold;transform:scaleX(0.9584);">PRODUTOS</div>
<div class="t" style="left:409.00px;top:308.42px;font-size:12.5px;color:#262626;font-weight:bold;transform:scaleX(0.9777);">TRANSPORTADORA</div>
<div class="t" style="left:577.60px;top:308.42px;font-size:12.5px;color:#262626;font-weight:bold;transform:scaleX(0.9213);">CFOP</div>
<div class="t" style="left:693.25px;top:308.42px;font-size:12.5px;color:#262626;font-weight:bold;transform:scaleX(0.9973);">MEDIDAS</div>
<div style="left:33px;top:344px;width:481px;height:39px;background:#a6a6a6;"></div>
<div style="left:122px;top:344px;width:1px;height:39px;background:#dcdcdc;"></div>
<div style="left:381px;top:344px;width:1px;height:39px;background:#dcdcdc;"></div>
<div class="t" style="left:39.50px;top:349.00px;font-size:13px;color:#fff;font-weight:bold;transform:scaleX(1.0034);">ID_UNIDAD_</div>
<div class="t" style="left:53.40px;top:368.50px;font-size:13px;color:#fff;font-weight:bold;transform:scaleX(0.9789);">MEDIDA</div>
<div class="t" style="left:217.40px;top:359.30px;font-size:13px;color:#fff;font-weight:bold;transform:scaleX(0.8870);">DESCRIÇÃO</div>
<div class="t" style="left:407.00px;top:359.30px;font-size:13px;color:#fff;font-weight:bold;transform:scaleX(0.9267);">ABREVIAÇÃO</div>
<div style="left:106px;top:367px;width:15px;height:15px;background:#f2f2f2;border:1px solid #c8c8c8;"></div>
<svg style="left:110px;top:373px;" width="8" height="5" viewBox="0 0 8 5"><path d="M0 0 H7 L3.5 4 Z" fill="#595959"/></svg>
<div style="left:365px;top:367px;width:15px;height:15px;background:#f2f2f2;border:1px solid #c8c8c8;"></div>
<svg style="left:369px;top:373px;" width="8" height="5" viewBox="0 0 8 5"><path d="M0 0 H7 L3.5 4 Z" fill="#595959"/></svg>
<div style="left:497px;top:367px;width:15px;height:15px;background:#f2f2f2;border:1px solid #c8c8c8;"></div>
<svg style="left:501px;top:373px;" width="8" height="5" viewBox="0 0 8 5"><path d="M0 0 H7 L3.5 4 Z" fill="#595959"/></svg>
<div style="left:33px;top:386px;width:89px;height:18px;background:#d9d9d9;"></div>
<div style="left:123px;top:386px;width:258px;height:18px;background:#d9d9d9;"></div>
<div style="left:382px;top:386px;width:132px;height:18px;background:#d9d9d9;"></div>
<div style="left:33px;top:405px;width:89px;height:19px;background:#ededed;"></div>
<div style="left:123px;top:405px;width:258px;height:19px;background:#ededed;"></div>
<div style="left:382px;top:405px;width:132px;height:19px;background:#ededed;"></div>
<div style="left:33px;top:425px;width:89px;height:19px;background:#d9d9d9;"></div>
<div style="left:123px;top:425px;width:258px;height:19px;background:#d9d9d9;"></div>
<div style="left:382px;top:425px;width:132px;height:19px;background:#d9d9d9;"></div>
<div style="left:33px;top:445px;width:89px;height:19px;background:#ededed;"></div>
<div style="left:123px;top:445px;width:258px;height:19px;background:#ededed;"></div>
<div style="left:382px;top:445px;width:132px;height:19px;background:#ededed;"></div>
<div style="left:33px;top:465px;width:89px;height:19px;background:#d9d9d9;"></div>
<div style="left:123px;top:465px;width:258px;height:19px;background:#d9d9d9;"></div>
<div style="left:382px;top:465px;width:132px;height:19px;background:#d9d9d9;"></div>
<div style="left:33px;top:485px;width:89px;height:19px;background:#ededed;"></div>
<div style="left:123px;top:485px;width:258px;height:19px;background:#ededed;"></div>
<div style="left:382px;top:485px;width:132px;height:19px;background:#ededed;"></div>
<div style="left:33px;top:505px;width:89px;height:19px;background:#d9d9d9;"></div>
<div style="left:123px;top:505px;width:258px;height:19px;background:#d9d9d9;"></div>
<div style="left:382px;top:505px;width:132px;height:19px;background:#d9d9d9;"></div>
<div style="left:33px;top:525px;width:89px;height:19px;background:#ededed;"></div>
<div style="left:123px;top:525px;width:258px;height:19px;background:#ededed;"></div>
<div style="left:382px;top:525px;width:132px;height:19px;background:#ededed;"></div>
<div style="left:33px;top:545px;width:89px;height:19px;background:#d9d9d9;"></div>
<div style="left:123px;top:545px;width:258px;height:19px;background:#d9d9d9;"></div>
<div style="left:382px;top:545px;width:132px;height:19px;background:#d9d9d9;"></div>
<div style="left:33px;top:565px;width:89px;height:19px;background:#ededed;"></div>
<div style="left:123px;top:565px;width:258px;height:19px;background:#ededed;"></div>
<div style="left:382px;top:565px;width:132px;height:19px;background:#ededed;"></div>
<div style="left:33px;top:585px;width:89px;height:19px;background:#d9d9d9;"></div>
<div style="left:123px;top:585px;width:258px;height:19px;background:#d9d9d9;"></div>
<div style="left:382px;top:585px;width:132px;height:19px;background:#d9d9d9;"></div>
<div style="left:33px;top:605px;width:89px;height:19px;background:#ededed;"></div>
<div style="left:123px;top:605px;width:258px;height:19px;background:#ededed;"></div>
<div style="left:382px;top:605px;width:132px;height:19px;background:#ededed;"></div>
<div style="left:33px;top:625px;width:89px;height:19px;background:#d9d9d9;"></div>
<div style="left:123px;top:625px;width:258px;height:19px;background:#d9d9d9;"></div>
<div style="left:382px;top:625px;width:132px;height:19px;background:#d9d9d9;"></div>
<div style="left:33px;top:645px;width:89px;height:19px;background:#ededed;"></div>
<div style="left:123px;top:645px;width:258px;height:19px;background:#ededed;"></div>
<div style="left:382px;top:645px;width:132px;height:19px;background:#ededed;"></div>
<div style="left:33px;top:665px;width:89px;height:19px;background:#d9d9d9;"></div>
<div style="left:123px;top:665px;width:258px;height:19px;background:#d9d9d9;"></div>
<div style="left:382px;top:665px;width:132px;height:19px;background:#d9d9d9;"></div>
<div style="left:33px;top:685px;width:89px;height:19px;background:#ededed;"></div>
<div style="left:123px;top:685px;width:258px;height:19px;background:#ededed;"></div>
<div style="left:382px;top:685px;width:132px;height:19px;background:#ededed;"></div>
<div style="left:33px;top:705px;width:89px;height:19px;background:#d9d9d9;"></div>
<div style="left:123px;top:705px;width:258px;height:19px;background:#d9d9d9;"></div>
<div style="left:382px;top:705px;width:132px;height:19px;background:#d9d9d9;"></div>
<div class="t" style="left:74.47px;top:390.75px;font-size:12.7px;color:#000;">1</div>
<div class="t" style="left:240.70px;top:390.75px;font-size:12.7px;color:#000;">Ano</div>
<div class="t" style="left:438.69px;top:390.75px;font-size:12.7px;color:#000;">AN</div>
<div class="t" style="left:74.47px;top:410.75px;font-size:12.7px;color:#000;">2</div>
<div class="t" style="left:234.38px;top:410.75px;font-size:12.7px;color:#000;">Blister</div>
<div class="t" style="left:439.39px;top:410.75px;font-size:12.7px;color:#000;">BT</div>
<div class="t" style="left:74.47px;top:430.75px;font-size:12.7px;color:#000;">3</div>
<div class="t" style="left:236.12px;top:430.75px;font-size:12.7px;color:#000;">Bolsa</div>
<div class="t" style="left:439.03px;top:430.75px;font-size:12.7px;color:#000;">BS</div>
<div class="t" style="left:74.47px;top:450.75px;font-size:12.7px;color:#000;">4</div>
<div class="t" style="left:230.48px;top:450.75px;font-size:12.7px;color:#000;">Garrafa</div>
<div class="t" style="left:437.98px;top:450.75px;font-size:12.7px;color:#000;">GR</div>
<div class="t" style="left:74.47px;top:470.75px;font-size:12.7px;color:#000;">5</div>
<div class="t" style="left:232.59px;top:470.75px;font-size:12.7px;color:#000;">Espiga</div>
<div class="t" style="left:439.03px;top:470.75px;font-size:12.7px;color:#000;">ES</div>
<div class="t" style="left:74.47px;top:490.75px;font-size:12.7px;color:#000;">6</div>
<div class="t" style="left:228.36px;top:490.75px;font-size:12.7px;color:#000;">Unidade</div>
<div class="t" style="left:438.34px;top:490.75px;font-size:12.7px;color:#000;">UN</div>
<div class="t" style="left:74.47px;top:510.75px;font-size:12.7px;color:#000;">7</div>
<div class="t" style="left:235.78px;top:510.75px;font-size:12.7px;color:#000;">Caixa</div>
<div class="t" style="left:438.69px;top:510.75px;font-size:12.7px;color:#000;">CX</div>
<div class="t" style="left:74.47px;top:530.75px;font-size:12.7px;color:#000;">8</div>
<div class="t" style="left:237.53px;top:530.75px;font-size:12.7px;color:#000;">Peça</div>
<div class="t" style="left:438.69px;top:530.75px;font-size:12.7px;color:#000;">PC</div>
<div class="t" style="left:74.47px;top:550.75px;font-size:12.7px;color:#000;">9</div>
<div class="t" style="left:232.61px;top:550.75px;font-size:12.7px;color:#000;">Centilit</div>
<div class="t" style="left:438.69px;top:550.75px;font-size:12.7px;color:#000;">CE</div>
<div class="t" style="left:70.94px;top:570.75px;font-size:12.7px;color:#000;">10</div>
<div class="t" style="left:226.25px;top:570.75px;font-size:12.7px;color:#000;">Cartucho</div>
<div class="t" style="left:438.69px;top:570.75px;font-size:12.7px;color:#000;">CA</div>
<div class="t" style="left:71.41px;top:590.75px;font-size:12.7px;color:#000;">11</div>
<div class="t" style="left:235.78px;top:590.75px;font-size:12.7px;color:#000;">Duzia</div>
<div class="t" style="left:439.05px;top:590.75px;font-size:12.7px;color:#000;">DZ</div>
<div class="t" style="left:70.94px;top:610.75px;font-size:12.7px;color:#000;">12</div>
<div class="t" style="left:232.61px;top:610.75px;font-size:12.7px;color:#000;">Frasco</div>
<div class="t" style="left:439.05px;top:610.75px;font-size:12.7px;color:#000;">FR</div>
<div class="t" style="left:70.94px;top:630.75px;font-size:12.7px;color:#000;">13</div>
<div class="t" style="left:235.06px;top:630.75px;font-size:12.7px;color:#000;">Galao</div>
<div class="t" style="left:439.03px;top:630.75px;font-size:12.7px;color:#000;">GL</div>
<div class="t" style="left:70.94px;top:650.75px;font-size:12.7px;color:#000;">14</div>
<div class="t" style="left:232.61px;top:650.75px;font-size:12.7px;color:#000;">Grama</div>
<div class="t" style="left:442.56px;top:650.75px;font-size:12.7px;color:#000;">G</div>
<div class="t" style="left:70.94px;top:670.75px;font-size:12.7px;color:#000;">15</div>
<div class="t" style="left:224.52px;top:670.75px;font-size:12.7px;color:#000;">Miligrama</div>
<div class="t" style="left:437.28px;top:670.75px;font-size:12.7px;color:#000;">MG</div>
<div class="t" style="left:70.94px;top:690.75px;font-size:12.7px;color:#000;">16</div>
<div class="t" style="left:219.20px;top:690.75px;font-size:12.7px;color:#000;">Quilograma</div>
<div class="t" style="left:438.33px;top:690.75px;font-size:12.7px;color:#000;">KG</div>
<div class="t" style="left:70.94px;top:710.75px;font-size:12.7px;color:#000;">17</div>
<div class="t" style="left:239.66px;top:710.75px;font-size:12.7px;color:#000;">Litro</div>
<div class="t" style="left:443.97px;top:710.75px;font-size:12.7px;color:#000;">L</div>
<div style="left:1344px;top:226px;width:1px;height:491px;background:#a6a6a6;"></div>
<div style="left:1345px;top:207px;width:21px;height:510px;background:#e6e6e6;"></div>
<div style="left:1348px;top:209px;width:15px;height:15px;background:#fff;border:1px solid #c6c6c6;"></div>
<svg style="left:1351px;top:214px;" width="9" height="5" viewBox="0 0 9 5"><path d="M0.5 4.5 L4.5 0.5 L8.5 4.5 Z" fill="#666"/></svg>
<div style="left:1347px;top:224px;width:18px;height:477px;background:#d9d9d9;"></div>
<div style="left:1348px;top:224px;width:15px;height:100px;background:#fff;border:1px solid #c6c6c6;"></div>
<div style="left:1348px;top:701px;width:15px;height:16px;background:#fff;border:1px solid #c6c6c6;"></div>
<svg style="left:1351px;top:707px;" width="9" height="5" viewBox="0 0 9 5"><path d="M0.5 0.5 L4.5 4.5 L8.5 0.5 Z" fill="#666"/></svg>
<div style="left:0px;top:717px;width:1366px;height:28px;background:#e6e6e6;"></div>
<div style="left:0px;top:717px;width:1366px;height:1px;background:#b4b4b4;"></div>
<svg style="left:26px;top:725px;" width="6" height="10" viewBox="0 0 6 10"><path d="M5 0.5 V9.5 L0.5 5 Z" fill="#c2c2c2"/></svg>
<svg style="left:56px;top:725px;" width="6" height="10" viewBox="0 0 6 10"><path d="M0.5 0.5 V9.5 L5 5 Z" fill="#c2c2c2"/></svg>
<div style="left:100px;top:721px;width:1px;height:20px;background:#9d9d9d;"></div>
<div style="left:202px;top:721px;width:1px;height:20px;background:#9d9d9d;"></div>
<div style="left:323px;top:721px;width:1px;height:20px;background:#9d9d9d;"></div>
<div style="left:496px;top:721px;width:1px;height:20px;background:#9d9d9d;"></div>
<div style="left:703px;top:721px;width:1px;height:20px;background:#9d9d9d;"></div>
<div style="left:777px;top:721px;width:1px;height:20px;background:#9d9d9d;"></div>
<div style="left:819px;top:721px;width:1px;height:20px;background:#9d9d9d;"></div>
<div style="left:891px;top:721px;width:1px;height:20px;background:#9d9d9d;"></div>
<div style="left:944px;top:721px;width:1px;height:20px;background:#9d9d9d;"></div>
<div class="t" style="left:114.50px;top:724.00px;font-size:13px;color:#444;transform:scaleX(0.8681);">CADCLIENTE</div>
<div class="t" style="left:216.00px;top:724.00px;font-size:13px;color:#444;transform:scaleX(0.9119);">CADPRODUTOS</div>
<div class="t" style="left:339.00px;top:724.00px;font-size:13px;color:#444;transform:scaleX(0.9171);">CADTRANSPORTADORA</div>
<div class="t" style="left:509.70px;top:724.00px;font-size:13px;color:#444;transform:scaleX(0.8114);">CFOP</div>
<div class="t" style="left:649.50px;top:724.00px;font-size:13px;color:#444;transform:scaleX(0.8783);">DANFE</div>
<div class="t" style="left:716.00px;top:724.00px;font-size:13px;color:#444;transform:scaleX(0.9162);">DANFE2</div>
<div class="t" style="left:790.00px;top:724.00px;font-size:13px;color:#444;transform:scaleX(0.9633);">INI</div>
<div class="t" style="left:832.00px;top:724.00px;font-size:13px;color:#444;transform:scaleX(0.9100);">CONFIG</div>
<div class="t" style="left:904.00px;top:724.00px;font-size:13px;color:#444;transform:scaleX(1.0293);">MVA</div>
<div style="left:553px;top:717px;width:84px;height:25px;background:#fff;border-left:1px solid #c6c6c6;border-right:1px solid #c6c6c6;"></div>
<div style="left:553px;top:740px;width:84px;height:2px;background:#217346;"></div>
<div class="t" style="left:565.60px;top:724.00px;font-size:13px;color:#217346;font-weight:bold;transform:scaleX(0.9741);">MEDIDAS</div>
<svg style="left:977px;top:721px;" width="18" height="18" viewBox="0 0 18 18"><circle cx="9" cy="9" r="8" fill="none" stroke="#666" stroke-width="1.2"/><path d="M9 4.5 V13.5 M4.5 9 H13.5" stroke="#666" stroke-width="1.3"/></svg>
<div style="left:1032px;top:726px;width:2px;height:2px;background:#a6a6a6;border-radius:1px;"></div>
<div style="left:1032px;top:730px;width:2px;height:2px;background:#a6a6a6;border-radius:1px;"></div>
<div style="left:1032px;top:734px;width:2px;height:2px;background:#a6a6a6;border-radius:1px;"></div>
<div style="left:1049px;top:724px;width:15px;height:15px;background:#fff;border:1px solid #c6c6c6;"></div>
<svg style="left:1053px;top:727px;" width="5" height="9" viewBox="0 0 5 9"><path d="M4.5 0.5 V8.5 L0.5 4.5 Z" fill="#666"/></svg>
<div style="left:1064px;top:724px;width:17px;height:15px;background:#fff;border:1px solid #c6c6c6;"></div>
<div style="left:1081px;top:724px;width:246px;height:15px;background:#dadada;"></div>
<div style="left:1327px;top:724px;width:15px;height:15px;background:#fff;border:1px solid #c6c6c6;"></div>
<svg style="left:1333px;top:727px;" width="5" height="9" viewBox="0 0 5 9"><path d="M0.5 0.5 V8.5 L4.5 4.5 Z" fill="#666"/></svg>
<div style="left:0px;top:745px;width:1366px;height:23px;background:#f3f2f1;"></div>
<div style="left:0px;top:745px;width:1366px;height:1px;background:#d4d4d4;"></div>
<svg style="left:7px;top:749px;" width="16" height="15" viewBox="0 0 16 15"><rect x="1.5" y="1.5" width="13" height="11" fill="none" stroke="#444" stroke-width="1.1"/><path d="M1.5 3.5 H14.5 M3.5 6 H6 M3.5 8.5 H5.5 M3.5 11 H5.5" stroke="#444" stroke-width="1"/><circle cx="10.5" cy="10" r="4" fill="#f3f2f1" stroke="#444" stroke-width="1.1"/><circle cx="10.5" cy="10" r="1.7" fill="#444"/></svg>
<div style="left:1066px;top:745px;width:40px;height:23px;background:#c8c6c4;"></div>
<svg style="left:1077px;top:747px;" width="17" height="17" viewBox="0 0 17 17"><path d="M2.5 2.5 H14.5 V14.5 H2.5 Z M6.5 2.5 V14.5 M10.5 2.5 V14.5 M2.5 6.5 H14.5 M2.5 10.5 H14.5" fill="none" stroke="#333" stroke-width="1.3"/></svg>
<svg style="left:1118px;top:747px;" width="17" height="17" viewBox="0 0 17 17"><rect x="2.5" y="2.5" width="12" height="12" fill="none" stroke="#444" stroke-width="1.1"/><rect x="4.5" y="4.5" width="8" height="8" fill="none" stroke="#444" stroke-width="1"/><path d="M6 7 H11 M6 9 H11 M6 11 H11" stroke="#444" stroke-width="0.8"/></svg>
<svg style="left:1157px;top:747px;" width="17" height="17" viewBox="0 0 17 17"><path d="M2.5 2.5 H14.5 V14.5 H2.5 Z M2.5 9.5 H9.5 V2.5 M6 2.5 V9.5" fill="none" stroke="#444" stroke-width="1.1"/></svg>
<div style="left:1192px;top:755px;width:8px;height:1.2px;background:#444;"></div>
<div style="left:1205px;top:755.5px;width:100px;height:1px;background:#a8a8a8;"></div>
<div style="left:1253px;top:750px;width:4px;height:12px;background:#666;"></div>
<div style="left:1309px;top:755px;width:9px;height:1.2px;background:#444;"></div>
<div style="left:1313px;top:750.5px;width:1.2px;height:9px;background:#444;"></div>
<div class="t" style="left:1331.30px;top:749.84px;font-size:12px;color:#444;transform:scaleX(0.8603);">100%</div>
</body></html>
